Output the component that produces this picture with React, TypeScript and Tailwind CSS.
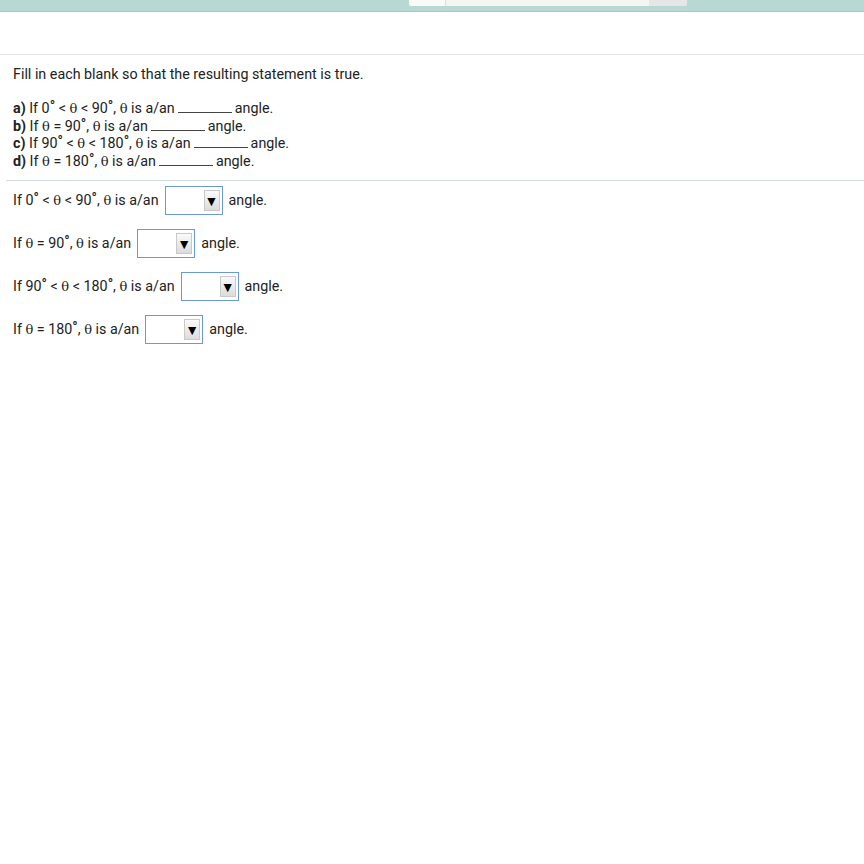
import React from "react";

function Deg() {
  return <sup className="relative top-[-2px] text-[14px] leading-none font-bold">°</sup>;
}

function T() {
  return <span style={{ fontFamily: "'DejaVu Serif', 'Liberation Serif', serif" }} className="text-[13px]">θ</span>;
}

function Blank() {
  return <span className="mx-[3px] inline-block w-[54px] border-b border-[#444] align-baseline" />;
}

function Select() {
  return (
    <span className="mx-[6px] inline-flex h-[29px] w-[58px] items-center justify-end border border-[#6a98d8] bg-white pr-[2px] align-middle">
      <span className="flex h-[21px] w-[16px] items-center justify-center border border-[#c9c9c9] bg-gradient-to-b from-[#fafafa] to-[#dcdcdc] text-[14px] leading-none text-black">
        ▼
      </span>
    </span>
  );
}

const rows: React.ReactNode[] = [
  <>If 0<Deg /> &lt; <T /> &lt; 90<Deg />, <T /> is a/an</>,
  <>If <T /> = 90<Deg />, <T /> is a/an</>,
  <>If 90<Deg /> &lt; <T /> &lt; 180<Deg />, <T /> is a/an</>,
  <>If <T /> = 180<Deg />, <T /> is a/an</>,
];

export default function App() {
  return (
    <div className="min-h-[864px] bg-white text-[14.3px] text-[#222]" style={{ fontFamily: "Roboto, 'Liberation Sans', sans-serif" }}>
      <div className="h-[12px] border-b border-[#a9c9c3] bg-[#b8d9d3]">
        <div className="ml-[409px] flex h-[6px] w-[278px] overflow-hidden rounded-b-[2px]">
          <div className="w-[37px] border-r border-[#ddd] bg-[#fafaf8]" />
          <div className="flex-1 bg-[#f5f5f2]" />
          <div className="w-[38px] bg-[#e6e6e6]" />
        </div>
      </div>
      <div className="h-[43px] border-b border-[#e2e6e6]" />

      <div className="pl-[6px]">
        <div className="pl-[7px] pt-[9px] pb-[10px]">
          <p className="leading-[20px]">Fill in each blank so that the resulting statement is true.</p>
          <div className="mt-[16px] leading-[17.5px]">
            <div><b>a)</b> If 0<Deg /> &lt; <T /> &lt; 90<Deg />, <T /> is a/an<Blank />angle.</div>
            <div><b>b)</b> If <T /> = 90<Deg />, <T /> is a/an<Blank />angle.</div>
            <div><b>c)</b> If 90<Deg /> &lt; <T /> &lt; 180<Deg />, <T /> is a/an<Blank />angle.</div>
            <div><b>d)</b> If <T /> = 180<Deg />, <T /> is a/an<Blank />angle.</div>
          </div>
        </div>
        <div className="border-t border-[#d5dcdc] pl-[7px] pt-[5px]">
          <div className="flex flex-col gap-[14px]">
            {rows.map((r, i) => (
              <div key={i} className="flex h-[29px] items-center">
                <span>{r}</span>
                <Select />
                <span>angle.</span>
              </div>
            ))}
          </div>
        </div>
      </div>
    </div>
  );
}
